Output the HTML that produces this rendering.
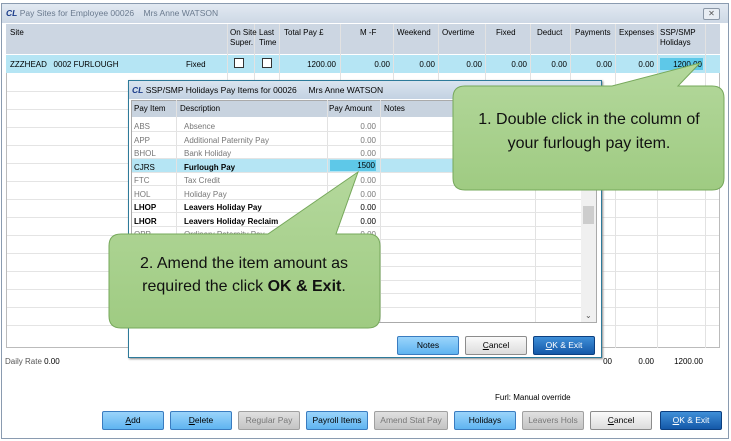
<!DOCTYPE html>
<html><head><meta charset="utf-8"><style>
*{margin:0;padding:0;box-sizing:border-box}
body{width:731px;height:441px;background:#fff;font-family:"Liberation Sans",sans-serif;font-size:8px;color:#000;position:relative;overflow:hidden}
.a{position:absolute;white-space:nowrap}
.r{text-align:right}
.btn{position:absolute;height:19px;border:1px solid #3a7cc0;border-radius:2px;background:linear-gradient(#9ad4fb,#5fb4f0);text-align:center;line-height:17px;font-size:8.5px;color:#000}
.dis{background:linear-gradient(#e0e0e0,#c4c4c4);border-color:#a0a0a0;color:#777}
.can{background:linear-gradient(#fafafa,#dcdcdc);border-color:#8c8c8c}
.ok{background:linear-gradient(#3f8fd8,#1458a8);border-color:#0c3f80;color:#fff}
.vl{position:absolute;width:1px;background:#e2e2e2}
.hl{position:absolute;height:1px;background:#e4e4e4}
.cb{position:absolute;width:10px;height:10px;border:1px solid #333;background:#fff}
</style></head><body>
<div class="a" style="left:1px;top:3px;width:728px;height:436px;border:1px solid #8a9bb0;background:#fff"></div>
<div class="a" style="left:2px;top:4px;width:726px;height:19px;background:linear-gradient(#e2e9f2,#cdd8e5)"></div>
<div class="a" style="left:6px;top:8px;font-size:8.5px;color:#6a7a8e"><b style="color:#1b3c8a;font-style:italic">CL</b> Pay Sites for Employee 00026 &nbsp;&nbsp; Mrs Anne WATSON</div>
<div class="a" style="left:703px;top:8px;width:17px;height:12px;border:1px solid #8b97a6;border-radius:2px;background:#e8edf3;font-size:8px;text-align:center;line-height:10px;color:#555">✕</div>
<div class="a" style="left:6px;top:24px;width:714px;height:30px;background:#ccd6e2"></div>
<div class="a" style="left:6px;top:55px;width:714px;height:18px;background:#b5e5f4"></div>
<div class="a" style="left:6px;top:73px;width:714px;height:275px;border:1px solid #bbb;border-top:none"></div>
<div class="hl" style="left:7px;top:91px;width:712px"></div><div class="hl" style="left:7px;top:109px;width:712px"></div><div class="hl" style="left:7px;top:127px;width:712px"></div><div class="hl" style="left:7px;top:145px;width:712px"></div><div class="hl" style="left:7px;top:163px;width:712px"></div><div class="hl" style="left:7px;top:181px;width:712px"></div><div class="hl" style="left:7px;top:199px;width:712px"></div><div class="hl" style="left:7px;top:217px;width:712px"></div><div class="hl" style="left:7px;top:235px;width:712px"></div><div class="hl" style="left:7px;top:253px;width:712px"></div><div class="hl" style="left:7px;top:271px;width:712px"></div><div class="hl" style="left:7px;top:289px;width:712px"></div><div class="hl" style="left:7px;top:307px;width:712px"></div><div class="hl" style="left:7px;top:325px;width:712px"></div>
<div class="vl" style="left:227px;top:24px;height:324px"></div><div class="vl" style="left:254px;top:24px;height:324px"></div><div class="vl" style="left:279px;top:24px;height:324px"></div><div class="vl" style="left:340px;top:24px;height:324px"></div><div class="vl" style="left:393px;top:24px;height:324px"></div><div class="vl" style="left:438px;top:24px;height:324px"></div><div class="vl" style="left:485px;top:24px;height:324px"></div><div class="vl" style="left:530px;top:24px;height:324px"></div><div class="vl" style="left:570px;top:24px;height:324px"></div><div class="vl" style="left:615px;top:24px;height:324px"></div><div class="vl" style="left:657px;top:24px;height:324px"></div><div class="vl" style="left:705px;top:24px;height:324px"></div>
<div class="a" style="left:10px;top:28px">Site</div>
<div class="a" style="left:230px;top:28px;line-height:10px">On Site<br>Super.</div>
<div class="a" style="left:259px;top:28px;line-height:10px">Last<br>Time</div>
<div class="a" style="left:284px;top:28px">Total Pay £</div>
<div class="a" style="left:360px;top:28px">M -F</div>
<div class="a" style="left:397px;top:28px">Weekend</div>
<div class="a" style="left:442px;top:28px">Overtime</div>
<div class="a" style="left:496px;top:28px">Fixed</div>
<div class="a" style="left:537px;top:28px">Deduct</div>
<div class="a" style="left:575px;top:28px">Payments</div>
<div class="a" style="left:619px;top:28px">Expenses</div>
<div class="a" style="left:660px;top:28px;line-height:10px">SSP/SMP<br>Holidays</div>
<div class="a" style="left:10px;top:60px">ZZZHEAD &nbsp;&nbsp;0002 FURLOUGH</div>
<div class="a" style="left:186px;top:60px">Fixed</div>
<div class="cb" style="left:234px;top:58px"></div><div class="cb" style="left:262px;top:58px"></div>
<div class="a r" style="left:282px;top:60px;width:54px">1200.00</div>
<div class="a r" style="left:340px;top:60px;width:50px">0.00</div>
<div class="a r" style="left:393px;top:60px;width:42px">0.00</div>
<div class="a r" style="left:438px;top:60px;width:44px">0.00</div>
<div class="a r" style="left:485px;top:60px;width:42px">0.00</div>
<div class="a r" style="left:530px;top:60px;width:37px">0.00</div>
<div class="a r" style="left:570px;top:60px;width:42px">0.00</div>
<div class="a r" style="left:615px;top:60px;width:39px">0.00</div>
<div class="a r" style="left:660px;top:58px;width:43px;height:12px;background:#5ec8e8;padding-top:2px;padding-right:1px">1200.00</div>
<div class="a" style="left:5px;top:357px;color:#555">Daily Rate <span style="color:#000">0.00</span></div>
<div class="a r" style="left:600px;top:357px;width:12px">00</div>
<div class="a r" style="left:615px;top:357px;width:39px">0.00</div>
<div class="a r" style="left:660px;top:357px;width:43px">1200.00</div>
<div class="a" style="left:495px;top:393px">Furl: Manual override</div>
<div class="btn" style="left:102px;top:411px;width:62px"><u>A</u>dd</div>
<div class="btn" style="left:170px;top:411px;width:62px"><u>D</u>elete</div>
<div class="btn dis" style="left:238px;top:411px;width:62px">Regular Pay</div>
<div class="btn" style="left:306px;top:411px;width:62px">Payroll Items</div>
<div class="btn dis" style="left:374px;top:411px;width:74px">Amend Stat Pay</div>
<div class="btn" style="left:454px;top:411px;width:62px">Holidays</div>
<div class="btn dis" style="left:522px;top:411px;width:62px">Leavers Hols</div>
<div class="btn can" style="left:590px;top:411px;width:62px"><u>C</u>ancel</div>
<div class="btn ok" style="left:660px;top:411px;width:62px"><u>O</u>K &amp; Exit</div>
<div class="a" style="left:128px;top:80px;width:474px;height:278px;border:1px solid #2d7a9a;background:#fff;box-shadow:1px 1px 2px #888"></div>
<div class="a" style="left:129px;top:81px;width:472px;height:18px;background:linear-gradient(#d9e4ef,#c3d2e2)"></div>
<div class="a" style="left:132px;top:85px;font-size:8.5px"><b style="color:#1b3c8a;font-style:italic">CL</b> SSP/SMP Holidays Pay Items for 00026 &nbsp;&nbsp;&nbsp; Mrs Anne WATSON</div>
<div class="a" style="left:131px;top:100px;width:450px;height:17px;background:#c8d3df"></div>
<div class="a" style="left:131px;top:158px;width:450px;height:14px;background:#b5e5f4"></div>
<div class="a" style="left:131px;top:100px;width:466px;height:223px;border:1px solid #aaa"></div>
<div class="a" style="left:581px;top:117px;width:15px;height:205px;background:#f0f0f0"></div>
<div class="a" style="left:583px;top:206px;width:11px;height:18px;background:#cdcdcd"></div>
<div class="a" style="left:585px;top:311px;font-size:8px;color:#555">⌄</div>
<div class="vl" style="left:176px;top:100px;height:222px"></div><div class="vl" style="left:327px;top:100px;height:222px"></div><div class="vl" style="left:380px;top:100px;height:222px"></div><div class="vl" style="left:535px;top:100px;height:222px"></div>
<div class="hl" style="left:132px;top:131px;width:449px"></div><div class="hl" style="left:132px;top:145px;width:449px"></div><div class="hl" style="left:132px;top:158px;width:449px"></div><div class="hl" style="left:132px;top:172px;width:449px"></div><div class="hl" style="left:132px;top:185px;width:449px"></div><div class="hl" style="left:132px;top:199px;width:449px"></div><div class="hl" style="left:132px;top:212px;width:449px"></div><div class="hl" style="left:132px;top:226px;width:449px"></div><div class="hl" style="left:132px;top:239px;width:449px"></div><div class="hl" style="left:132px;top:253px;width:449px"></div><div class="hl" style="left:132px;top:266px;width:449px"></div><div class="hl" style="left:132px;top:280px;width:449px"></div><div class="hl" style="left:132px;top:293px;width:449px"></div><div class="hl" style="left:132px;top:307px;width:449px"></div>
<div class="a" style="left:134px;top:104px">Pay Item</div><div class="a" style="left:180px;top:104px">Description</div><div class="a" style="left:329px;top:104px">Pay Amount</div><div class="a" style="left:384px;top:104px">Notes</div>
<div class="a" style="left:134px;top:120px;color:#777;line-height:13.5px">ABS<br>APP<br>BHOL<br><span style="color:#000">CJRS</span><br>FTC<br>HOL<br><b style="color:#000">LHOP</b><br><b style="color:#000">LHOR</b><br>OPP</div>
<div class="a" style="left:184px;top:120px;color:#777;line-height:13.5px">Absence<br>Additional Paternity Pay<br>Bank Holiday<br><b style="color:#000">Furlough Pay</b><br>Tax Credit<br>Holiday Pay<br><b style="color:#000">Leavers Holiday Pay</b><br><b style="color:#000">Leavers Holiday Reclaim</b><br>Ordinary Paternity Pay</div>
<div class="a r" style="left:328px;top:120px;width:48px;color:#777;line-height:13.5px">0.00<br>0.00<br>0.00<br>&nbsp;<br>0.00<br>0.00<br><span style="color:#000">0.00</span><br><span style="color:#000">0.00</span><br>0.00</div>
<div class="a r" style="left:330px;top:160px;width:46px;height:11px;background:#5ec8e8;line-height:11px;padding-right:1px">1500</div>
<div class="btn" style="left:397px;top:336px;width:62px">Notes</div>
<div class="btn can" style="left:465px;top:336px;width:62px"><u>C</u>ancel</div>
<div class="btn ok" style="left:533px;top:336px;width:62px"><u>O</u>K &amp; Exit</div>
<svg class="a" style="left:0;top:0" width="731" height="441">
<defs><linearGradient id="g" x1="0" y1="0" x2="0" y2="1"><stop offset="0" stop-color="#b4d89c"/><stop offset="1" stop-color="#9fcb82"/></linearGradient></defs>
<path d="M465,86 H612 L700,63 L678,86 H712 Q724,86 724,98 V178 Q724,190 712,190 H465 Q453,190 453,178 V98 Q453,86 465,86 Z" fill="url(#g)" stroke="#76a85b" stroke-width="1"/>
<path d="M121,234 H268 L358,172 L336,234 H368 Q380,234 380,246 V316 Q380,328 368,328 H121 Q109,328 109,316 V246 Q109,234 121,234 Z" fill="url(#g)" stroke="#76a85b" stroke-width="1"/>
<text x="589" y="124" font-family="Liberation Sans,sans-serif" font-size="16" text-anchor="middle" fill="#111">1. Double click in the column of</text>
<text x="589" y="148" font-family="Liberation Sans,sans-serif" font-size="16" text-anchor="middle" fill="#111">your furlough pay item.</text>
<text x="244" y="268" font-family="Liberation Sans,sans-serif" font-size="16" text-anchor="middle" fill="#111">2. Amend the item amount as</text>
<text x="244" y="291" font-family="Liberation Sans,sans-serif" font-size="16" text-anchor="middle" fill="#111">required the click <tspan font-weight="bold">OK &amp; Exit</tspan>.</text>
</svg>
</body></html>
